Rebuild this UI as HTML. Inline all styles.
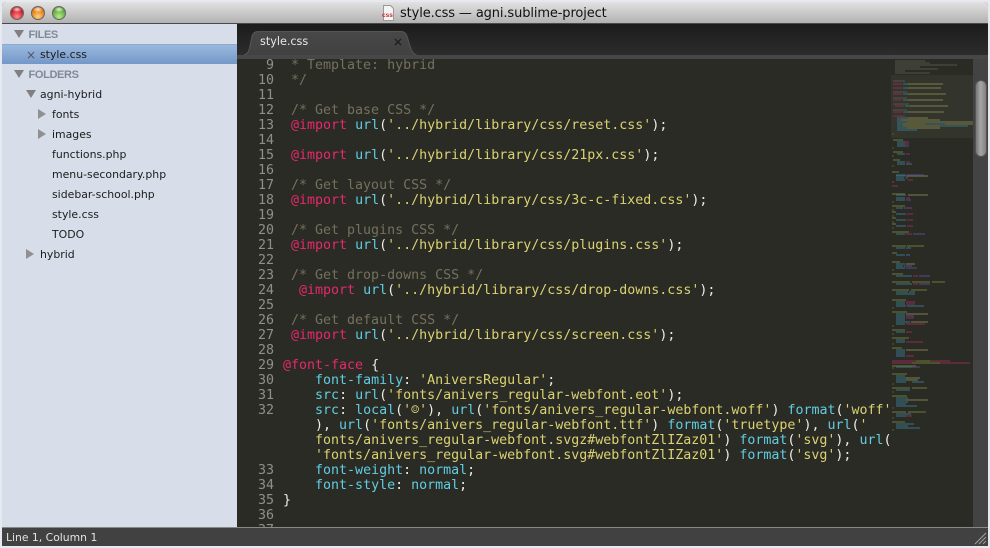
<!DOCTYPE html>
<html><head><meta charset="utf-8"><style>
html,body{margin:0;padding:0}
body{width:990px;height:548px;overflow:hidden;position:relative;background:#e6eaf0}
div{position:absolute}
#win{left:2px;top:2px;width:986px;height:544px;background:#2a2b25;overflow:hidden;border-radius:4px 4px 0 0}
#title{left:0;top:0;width:986px;height:21px;background:linear-gradient(#e2e2e2,#b2b2b2);border-bottom:1px solid #4a4a4a}
.tl{top:4px;width:14px;height:14px;border-radius:50%;border:.5px solid #666;box-sizing:border-box}
#ttext{left:398px;top:3px;font:13px/17px "DejaVu Sans",sans-serif;color:#111;white-space:nowrap;letter-spacing:-.12px}
#side{left:0;top:22px;width:235px;height:503px;background:#d7dee9}
.s{font:10.9px/20px "DejaVu Sans",sans-serif;color:#1c1c1c;white-space:nowrap;height:20px}
.h{font:bold 11px/20px "Liberation Sans",sans-serif;color:#7f8a97;letter-spacing:-.35px}
.ar{width:0;height:0;border-style:solid;border-color:transparent}
.dn{border-width:8px 5px 0 5px;border-top-color:#808080}
.rt{border-width:5px 0 5px 8px;border-left-color:#909090}
#sel{left:0;top:42px;width:235px;height:20px;background:linear-gradient(#9bb9dd,#7397c8);border-top:1px solid #8cabd4;box-sizing:border-box}
#tabbar{left:235px;top:22px;width:751px;height:31px;background:linear-gradient(#1c1c1c,#2c2c2c)}
#strip{left:235px;top:53px;width:751px;height:4px;background:#474747}
#code{left:281px;top:56px;font:13.31px/15px "DejaVu Sans Mono",monospace;color:#eeeee8;white-space:pre;width:610px;height:469px;overflow:hidden}
#nums{left:235px;top:56px;width:37px;height:469px;overflow:hidden;font:13.31px/15px "DejaVu Sans Mono",monospace;color:#8f908a;text-align:right;white-space:pre}
.c{color:#75715e}.p{color:#e8286e}.b{color:#60cde2}.y{color:#dcd272}
#track{left:971px;top:57px;width:15px;height:468px;background:#434343}
#thumb{left:973px;top:78px;width:12px;height:77px;border-radius:6px;background:linear-gradient(90deg,#767676,#a6a6a6 45%,#808080);border:1px solid #555;box-sizing:border-box}
#status{left:0;top:525px;width:986px;height:19px;background:#414141;border-top:1px solid #888;box-sizing:border-box;color:#e4e4e4;font:10.8px/20px "DejaVu Sans",sans-serif;padding-left:4px}
</style></head><body>
<div id="win">
<div id="title"></div>
<div class="tl" style="left:8px;background:radial-gradient(ellipse 5px 3px at 50% 20%,#ffd0d0,transparent),radial-gradient(circle at 50% 80%,#ff8a8a,#d0202c 60%,#8f1018)"></div>
<div class="tl" style="left:29px;background:radial-gradient(ellipse 5px 3px at 50% 20%,#ffeacc,transparent),radial-gradient(circle at 50% 80%,#ffd080,#e8801c 60%,#a85a10)"></div>
<div class="tl" style="left:50px;background:radial-gradient(ellipse 5px 3px at 50% 20%,#e4f8d0,transparent),radial-gradient(circle at 50% 80%,#b8ec90,#62ac3c 60%,#3a7c24)"></div>
<svg style="position:absolute;left:380px;top:3px" width="13" height="17"><path d="M1.500 .5H8.500L11.500 3.500V15.500H1.500Z" fill="#f4f4f4" stroke="#999"/><text x="0" y="12" font-family="Liberation Sans" font-weight="bold" font-size="6.500" fill="#c8282c">css</text></svg>
<div id="ttext">style.css — agni.sublime-project</div>

<div id="side"></div>
<div id="sel"></div>
<div class="ar dn" style="left:12px;top:28px"></div>
<div class="s h" style="left:26.500px;top:23px">FILES</div>
<div class="s" style="left:24px;top:42.500px;color:#556;font-size:12px">×</div>
<div class="s" style="left:38px;top:42.500px">style.css</div>
<div class="ar dn" style="left:12px;top:68px"></div>
<div class="s h" style="left:26.500px;top:63px">FOLDERS</div>
<div class="ar dn" style="left:24px;top:88px"></div>
<div class="s" style="left:38px;top:83px">agni-hybrid</div>
<div class="ar rt" style="left:36px;top:107px"></div>
<div class="s" style="left:50px;top:103px">fonts</div>
<div class="ar rt" style="left:36px;top:127px"></div>
<div class="s" style="left:50px;top:123px">images</div>
<div class="s" style="left:50px;top:143px">functions.php</div>
<div class="s" style="left:50px;top:163px">menu-secondary.php</div>
<div class="s" style="left:50px;top:183px">sidebar-school.php</div>
<div class="s" style="left:50px;top:203px">style.css</div>
<div class="s" style="left:50px;top:223px">TODO</div>
<div class="ar rt" style="left:24px;top:247px"></div>
<div class="s" style="left:38px;top:243px">hybrid</div>

<div id="tabbar"></div>
<svg style="position:absolute;left:241px;top:29px" width="175" height="25"><defs><linearGradient id="g" x1="0" y1="0" x2="0" y2="1"><stop offset="0" stop-color="#484848"/><stop offset="1" stop-color="#414141"/></linearGradient></defs><path d="M0 24.500C5 23 6 20 7 15L9 5C10 2 12 .5 15 .5H158C161 .5 163 2 164 5L167 15C168 20 170 23 174 24.500Z" fill="url(#g)" stroke="#555"/></svg>
<div style="left:258px;top:32px;font:11.2px/15px 'DejaVu Sans',sans-serif;color:#e8e8e8">style.css</div>
<svg style="position:absolute;left:392px;top:36px" width="9" height="9"><path d="M1 1L7 7M7 1L1 7" stroke="#1e1e1e" stroke-width="1.300"/></svg>

<div id="nums"> 9
10
11
12
13
14
15
16
17
18
19
20
21
22
23
24
25
26
27
28
29
30
31
32



33
34
35
36
37</div>
<div id="code"><span class="c"> * Template: hybrid
 */

 /* Get base CSS */</span>
 <span class="p">@import</span> <span class="b">url</span>(<span class="y">'../hybrid/library/css/reset.css'</span>);

 <span class="p">@import</span> <span class="b">url</span>(<span class="y">'../hybrid/library/css/21px.css'</span>);

<span class="c"> /* Get layout CSS */</span>
 <span class="p">@import</span> <span class="b">url</span>(<span class="y">'../hybrid/library/css/3c-c-fixed.css'</span>);

<span class="c"> /* Get plugins CSS */</span>
 <span class="p">@import</span> <span class="b">url</span>(<span class="y">'../hybrid/library/css/plugins.css'</span>);

<span class="c"> /* Get drop-downs CSS */</span>
  <span class="p">@import</span> <span class="b">url</span>(<span class="y">'../hybrid/library/css/drop-downs.css'</span>);

<span class="c"> /* Get default CSS */</span>
 <span class="p">@import</span> <span class="b">url</span>(<span class="y">'../hybrid/library/css/screen.css'</span>);

<span class="p">@font-face</span> {
    <span class="b">font-family</span>: <span class="y">'AniversRegular'</span>;
    <span class="b">src</span>: <span class="b">url</span>(<span class="y">'fonts/anivers_regular-webfont.eot'</span>);
    <span class="b">src</span>: <span class="b">local</span>(<span class="y">'☺'</span>), <span class="b">url</span>(<span class="y">'fonts/anivers_regular-webfont.woff'</span>) <span class="b">format</span>(<span class="y">'woff'</span>
    ), <span class="b">url</span>(<span class="y">'fonts/anivers_regular-webfont.ttf'</span>) <span class="b">format</span>(<span class="y">'truetype'</span>), <span class="b">url</span>(<span class="y">'</span>
    <span class="y">fonts/anivers_regular-webfont.svgz#webfontZlIZaz01'</span>) <span class="b">format</span>(<span class="y">'svg'</span>), <span class="b">url</span>(
    <span class="y">'fonts/anivers_regular-webfont.svg#webfontZlIZaz01'</span>) <span class="b">format</span>(<span class="y">'svg'</span>);
    <span class="b">font-weight</span>: <span class="b">normal</span>;
    <span class="b">font-style</span>: <span class="b">normal</span>;
}

</div>
<div id="strip"></div>

<svg style="position:absolute;left:-2px;top:-2px" width="990" height="548" fill="none" stroke-width="1.200">
<rect x="891" y="75" width="82" height="63" fill="#33342c"/>
<g opacity=".8">
<path stroke="#55554a" d="M895 61h30M895 63h35M895 65h62M895 67h25M895 69h43M895 71h10M895 73h35M893 81h12M893 92h14M893 98h14M893 104h16M893 110h14M892 134h2M892 148h2M892 156h2M892 166h2M892 182h2M892 202h2M892 210h2M892 216h2M892 222h2M892 228h2M892 270h2M892 308h2M892 326h2M892 334h2M892 344h2M892 368h2M892 384h2M892 392h2M892 408h2M892 418h2M892 430h2"/>
<path stroke="#8f2c54" d="M893 84h9M893 88h9M893 94h9M893 100h9M895 106h9M893 112h9M893 116h12M905 142h4M905 144h4M906 154h4M906 162h4M908 180h5M892 186h6M906 198h4M907 214h6M907 220h6M907 226h6M906 234h6M913 276h5M913 284h5M906 302h9M906 304h9M906 318h8M906 324h19M906 332h6M906 342h17M906 356h8M892 361h24M930 361h20M892 363h20M940 363h30M906 416h6"/>
<path stroke="#3a7484" d="M903 84h5M903 88h5M903 94h5M903 100h5M905 106h5M903 112h5M897 118h11M897 120h4M897 122h10M897 124h6M925 124h20M897 126h6M940 126h28M897 128h10M897 130h20M897 142h8M897 144h8M897 146h8M897 154h8M897 162h8M897 164h8M906 164h6M896 175h10M896 176h9M896 178h8M896 180h9M896 195h10M896 198h9M896 200h9M896 208h7M896 214h10M896 220h10M896 226h10M896 234h9M896 248h9M906 248h5M896 255h9M906 255h4M896 264h9M896 266h7M896 268h9M896 276h16M896 284h16M896 292h12M909 292h6M896 294h19M896 302h9M896 304h9M896 306h10M907 306h17M896 314h9M896 316h9M896 318h9M896 320h9M896 322h14M896 324h9M896 332h9M896 340h9M896 342h9M896 350h9M896 352h9M896 354h9M896 356h9M896 367h16M896 376h9M896 378h12M896 380h10M896 382h10M912 382h12M896 390h14M896 398h12M896 400h10M896 402h12M896 404h10M896 406h21M896 414h15M896 416h10M896 424h18M896 426h12M896 428h24"/>
<path stroke="#7f7f4c" d="M908 84h35M908 88h33M908 94h38M908 100h35M910 106h38M908 112h36M908 118h20M901 120h39M907 122h66M903 124h22M945 124h28M903 126h37M907 128h33M906 176h22M908 195h20M906 264h9M906 314h22M911 322h17M906 350h22M906 378h14M906 380h12M906 400h22"/>
<path stroke="#6e7a2e" d="M893 140h10M893 152h10M893 160h7M892 172h7M892 194h13M892 206h13M892 212h4M892 218h4M892 224h4M892 232h17M892 246h14M907 246h17M892 253h5M892 262h8M892 274h11M892 282h18M912 282h18M932 282h13M892 290h17M911 290h16M892 300h14M892 312h15M892 330h13M892 338h17M892 348h10M916 361h14M912 363h28M892 366h24M892 374h15M892 388h18M912 388h15M892 396h15M892 412h14M908 412h18M892 422h13"/>
<path stroke="#5c4a8c" d="M905 146h4M907 175h17M905 178h3M913 234h12M906 200h5M904 208h8M904 266h8M906 268h11M919 276h11M919 284h11M906 316h8M912 367h8"/>
</g>
</svg>

<div id="track"></div>
<div id="thumb"></div>
<div id="status">Line 1, Column 1</div>
<svg style="position:absolute;left:972px;top:530px" width="13" height="13"><path d="M1 12L12 1M5 12L12 5M9 12L12 9" stroke="#a0a0a0"/></svg>
</div>
</body></html>
